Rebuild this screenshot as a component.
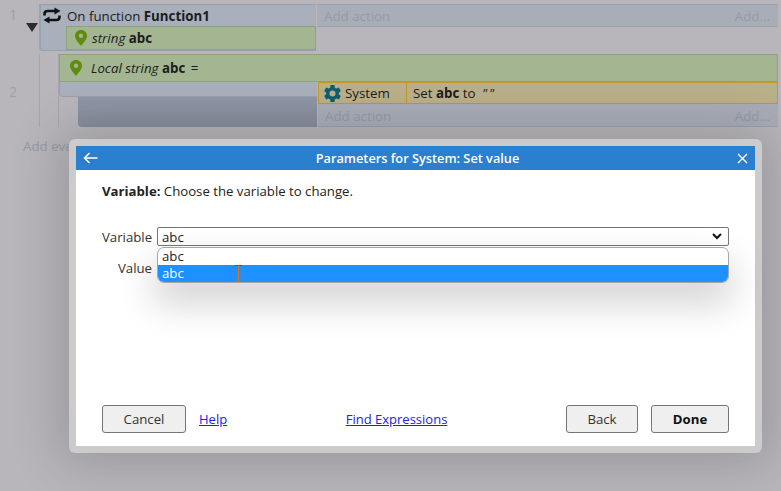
<div class="sheet">
	<div class="row row-one">
		<div class="gutter">
			<span class="num">1</span>
			<span class="toggle"></span>
		</div>
		<div class="cond">
			<div class="cond-head">
				<svg class="loop" viewBox="0 0 18 16" width="18" height="17">
					<path d="M1.500 8 V6.500 Q1.500 3.500 4.500 3.500 H13" fill="none" stroke="#111" stroke-width="2.600"/>
					<path d="M11.500 0 L17.500 3.500 L11.500 7 Z" fill="#111"/>
					<path d="M16.500 8 V9.500 Q16.500 12.500 13.500 12.500 H5" fill="none" stroke="#111" stroke-width="2.600"/>
					<path d="M6.500 9 L.5 12.500 L6.500 16 Z" fill="#111"/>
				</svg>
				<span>On function <b>Function1</b></span>
			</div>
			<div class="param">
				<svg class="pin" viewBox="0 0 12 16" width="12" height="16">
					<path fill-rule="evenodd" d="M6 0 C2.600 0 0 2.600 0 5.800 C0 9.600 4.400 13.600 6 16 C7.600 13.600 12 9.600 12 5.800 C12 2.600 9.400 0 6 0 Z M6 3.600 A2.200 2.200 0 1 1 6 8 A2.200 2.200 0 1 1 6 3.600 Z" fill="#5f8c0c"/>
				</svg>
				<span><i>string</i> <b>abc</b></span>
			</div>
		</div>
		<div class="add-row first">
			<span>Add action</span>
			<span>Add...</span>
		</div>
	</div>

	<div class="row row-two">
		<div class="gutter line">
			<span class="num">2</span>
		</div>
		<div class="indent"></div>
		<div class="sub">
			<div class="local">
				<svg class="pin" viewBox="0 0 12 16" width="12" height="16">
					<path fill-rule="evenodd" d="M6 0 C2.600 0 0 2.600 0 5.800 C0 9.600 4.400 13.600 6 16 C7.600 13.600 12 9.600 12 5.800 C12 2.600 9.400 0 6 0 Z M6 3.600 A2.200 2.200 0 1 1 6 8 A2.200 2.200 0 1 1 6 3.600 Z" fill="#5f8c0c"/>
				</svg>
				<span><i>Local string</i> <b>abc</b> <span class="eq">=</span></span>
			</div>
			<div class="sub-body">
				<div class="sub-left">
					<div class="sub-cond"></div>
					<div class="sub-fill"></div>
				</div>
				<div class="sub-right">
					<div class="action">
						<div class="obj">
							<svg viewBox="2 2 20 20" width="17" height="17">
								<path fill="#0f5f6e" d="M19.400 13a7.500 7.500 0 0 0 0-2l2.400-1.900-2.400-4.100-2.900 1.100a7.600 7.600 0 0 0-1.700-1L14.400 2H9.600l-.4 3.100a7.600 7.600 0 0 0-1.700 1L4.600 5 2.200 9.100 4.600 11a7.500 7.500 0 0 0 0 2l-2.400 1.900L4.600 19l2.900-1.100c.5.400 1.100.700 1.700 1l.4 3.100h4.800l.4-3.100c.6-.3 1.200-.6 1.700-1l2.900 1.100 2.400-4.100ZM12 15.600a3.600 3.600 0 1 1 0-7.200 3.600 3.600 0 0 1 0 7.200Z"/>
							</svg>
							<span>System</span>
						</div>
						<div class="act-text">Set <b>abc</b> to <span class="quote">""</span></div>
					</div>
					<div class="add-row">
						<span>Add action</span>
						<span>Add...</span>
					</div>
				</div>
			</div>
		</div>
	</div>

	<div class="add-event">Add event</div>
</div>

<div class="dialog">
	<div class="inner">
		<div class="title">
			<svg class="back" viewBox="0 0 15 12" width="15" height="12">
				<path d="M14.500 6 H1.500 M6.500 1 L1.500 6 L6.500 11" fill="none" stroke="#fff" stroke-width="1.500"/>
			</svg>
			<span class="title-text">Parameters for System: Set value</span>
			<svg class="close" viewBox="0 0 11 11" width="11" height="11">
				<path d="M1 1 L10 10 M10 1 L1 10" stroke="#fff" stroke-width="1.400"/>
			</svg>
		</div>
		<div class="body">
			<p class="hint"><b>Variable:</b> Choose the variable to change.</p>
			<div class="form">
				<label for="var-select">Variable</label>
				<div id="var-select" class="select">
					<span>abc</span>
					<svg viewBox="0 0 10 7" width="10" height="7">
						<path d="M1 1 L5 5 L9 1" fill="none" stroke="#111" stroke-width="2"/>
					</svg>
					<div class="popup">
						<div class="option">abc</div>
						<div class="option selected">abc</div>
						<svg class="ibeam" viewBox="0 0 7 18" width="7" height="18">
							<path d="M0 .5 H7 M0 17.500 H7" stroke="#555" stroke-width="1"/>
							<path d="M3.500 0 V18" stroke="#d9741c" stroke-width="1"/>
						</svg>
					</div>
				</div>
				<span class="label">Value</span>
				<div></div>
			</div>
			<div class="footer">
				<div class="group left">
					<button class="cancel">Cancel</button>
					<a href="#help">Help</a>
				</div>
				<a href="#expr">Find Expressions</a>
				<div class="group">
					<button class="back-btn">Back</button>
					<button class="done">Done</button>
				</div>
			</div>
		</div>
	</div>
</div>

<style>
	:global(body) {
		margin: 0;
		background: #b8b6bb;
		overflow: hidden;
	}

	.sheet {
		height: 491px;
		box-sizing: border-box;
		padding: 4px 3px 0 0;
		font-family: "Open Sans", "Noto Sans", sans-serif;
		font-size: 13.3px;
		color: #1c1c20;
		background: #b8b6bb;
	}

	.row {
		display: flex;
	}

	.row-one {
		height: 47px;
		margin-bottom: 3px;
	}

	.row-two {
		height: 73px;
	}

	.gutter {
		width: 39px;
		flex: none;
		position: relative;
		box-sizing: border-box;
		color: #9da1ab;
		font-size: 14px;
	}

	.gutter.line {
		width: 40px;
		border-right: 1px solid #a3a6b0;
	}

	.num {
		display: block;
		padding-left: 9px;
		line-height: 22px;
	}

	.row-two .num {
		padding-top: 27px;
	}

	.toggle {
		position: absolute;
		left: 26px;
		top: 19px;
		border-left: 6px solid transparent;
		border-right: 6px solid transparent;
		border-top: 9px solid #2b2b30;
	}

	.cond {
		width: 277px;
		flex: none;
		box-sizing: border-box;
		background: #a9b0bc;
		border-top: 1px solid #98a0ae;
		border-left: 2px solid #98a3b3;
		border-bottom: 1px solid #98a0ae;
		border-radius: 0 0 0 4px;
	}

	.cond-head {
		height: 21px;
		display: flex;
		align-items: center;
		gap: 6px;
		padding-left: 2px;
	}

	.param {
		height: 24px;
		margin-left: 25px;
		box-sizing: border-box;
		display: flex;
		align-items: center;
		gap: 5px;
		padding-left: 8px;
		background: #a3b591;
		border: 1px solid #8ca37f;
	}

	.add-row {
		height: 23px;
		flex: 1;
		box-sizing: border-box;
		display: flex;
		align-items: center;
		justify-content: space-between;
		padding: 2px 8px 0 7px;
		background: #a8adb8;
		border-bottom: 1px solid #9aa0ae;
		color: #959aa8;
	}

	.add-row.first {
		padding-top: 0;
		border-top: 1px solid #9aa0ae;
		margin-left: 1px;
	}

	.indent {
		width: 18px;
		flex: none;
		border-right: 1px solid #a3a6b0;
	}

	.sub {
		flex: 1;
		display: flex;
		flex-direction: column;
		min-width: 0;
	}

	.local {
		height: 28px;
		flex: none;
		box-sizing: border-box;
		display: flex;
		align-items: center;
		gap: 9px;
		padding-left: 10px;
		background: #a3b591;
		border: 1px solid #8ca37f;
	}

	.eq {
		margin-left: 2px;
	}

	.sub-body {
		flex: 1;
		display: flex;
	}

	.sub-left {
		width: 258px;
		flex: none;
		display: flex;
		flex-direction: column;
	}

	.sub-cond {
		height: 15px;
		flex: none;
		box-sizing: border-box;
		background: #a9b0bc;
		border-left: 1px solid #98a0ae;
		border-bottom: 1px solid #98a0ae;
		border-radius: 0 0 0 4px;
	}

	.sub-fill {
		flex: 1;
		margin-left: 19px;
		background: linear-gradient(#8f98a7, #858c9b);
		border-radius: 0 0 0 4px;
	}

	.sub-right {
		flex: 1;
		min-width: 0;
		display: flex;
		flex-direction: column;
		padding-left: 1px;
	}

	.action {
		height: 22px;
		flex: none;
		box-sizing: border-box;
		display: flex;
		background: #bab08a;
		border: 1px solid #c09a24;
	}

	.obj {
		width: 88px;
		flex: none;
		box-sizing: border-box;
		display: flex;
		align-items: center;
		gap: 4px;
		padding-left: 5px;
		border-right: 1px solid #c09a24;
	}

	.act-text {
		padding-left: 6px;
		line-height: 20px;
	}

	.quote {
		margin-left: 3px;
		font-style: italic;
		letter-spacing: 2px;
	}

	.add-event {
		margin: 9px 0 0 23px;
		color: #959aa8;
		line-height: 20px;
	}

	.dialog {
		position: absolute;
		left: 69px;
		top: 139px;
		width: 693px;
		height: 314px;
		box-sizing: border-box;
		padding: 7px;
		background: #cbcbcb;
		border-radius: 6px;
		box-shadow: 0 0 50px 10px rgba(30, 30, 35, 0.2);
		font-family: "Open Sans", "Noto Sans", sans-serif;
		font-size: 13.2px;
		color: #222;
	}

	.inner {
		height: 100%;
		display: flex;
		flex-direction: column;
		background: #fff;
	}

	.title {
		height: 24px;
		flex: none;
		display: flex;
		align-items: center;
		padding: 0 7px;
		background: #2a7fcf;
		color: #fff;
	}

	.title-text {
		flex: 1;
		text-align: center;
		font-weight: 600;
		font-size: 12.75px;
	}

	.body {
		flex: 1;
		display: flex;
		flex-direction: column;
		padding: 0 26px;
	}

	.hint {
		margin: 12px 0 0;
		line-height: 18px;
	}

	.form {
		margin-top: 27px;
		display: grid;
		grid-template-columns: 50px 1fr;
		grid-template-rows: 19px 1fr;
		column-gap: 5px;
		row-gap: 13px;
		align-items: center;
		flex: 1;
	}

	.form label,
	.label {
		text-align: right;
		color: #333;
	}

	.label {
		align-self: start;
	}

	.select {
		position: relative;
		height: 19px;
		box-sizing: border-box;
		display: flex;
		align-items: center;
		justify-content: space-between;
		padding: 0 6px 0 4px;
		border: 1px solid #767676;
		border-radius: 2px;
		background: #fff;
		color: #222;
	}

	.popup {
		position: absolute;
		left: -1px;
		right: -1px;
		top: 18px;
		height: 36px;
		margin-top: 1px;
		box-sizing: border-box;
		border: 1px solid #a6a6a6;
		border-radius: 7px;
		overflow: hidden;
		background: #fff;
		box-shadow: 0 18px 36px 4px rgba(0, 0, 0, 0.17);
		z-index: 2;
	}

	.option {
		height: 17px;
		line-height: 17px;
		padding-left: 4px;
		color: #222;
	}

	.option.selected {
		height: 18px;
		background: #1e90ff;
		color: #fff;
	}

	.ibeam {
		position: absolute;
		left: 77px;
		top: 17px;
	}

	.footer {
		display: flex;
		justify-content: space-between;
		align-items: center;
		height: 28px;
		margin-bottom: 13px;
	}

	.group {
		display: flex;
		align-items: center;
		gap: 13px;
	}

	button {
		height: 28px;
		box-sizing: border-box;
		padding: 0;
		font: inherit;
		color: #333;
		background: #efefef;
		border: 1px solid #767676;
		border-radius: 3px;
	}

	.cancel {
		width: 84px;
	}

	.back-btn {
		width: 72px;
	}

	.done {
		width: 78px;
		font-weight: 700;
		color: #111;
	}

	a {
		color: #2222e6;
		font-size: 13px;
	}
</style>
